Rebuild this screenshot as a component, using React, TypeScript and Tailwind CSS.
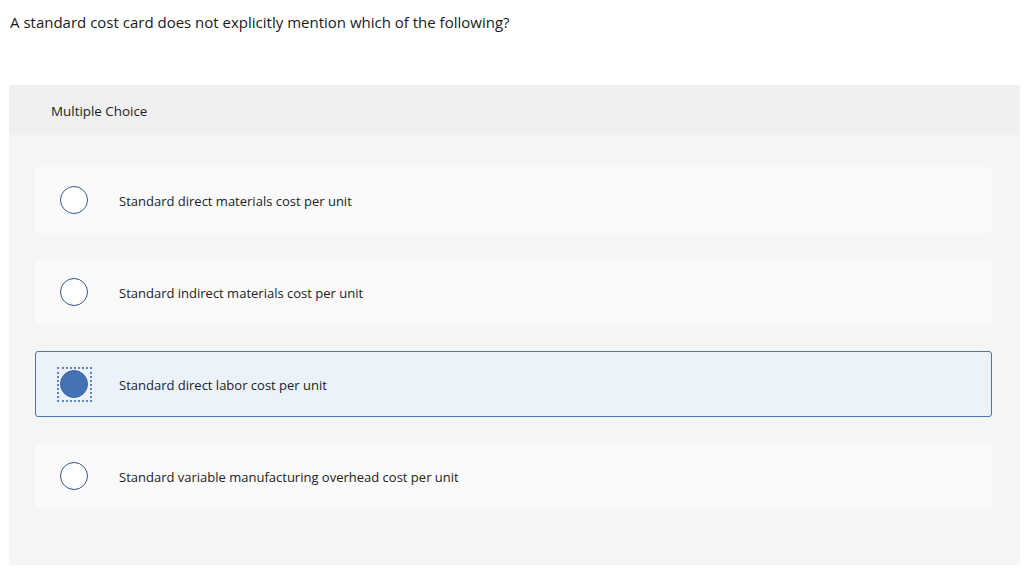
import { useState } from 'react';

const options = [
  'Standard direct materials cost per unit',
  'Standard indirect materials cost per unit',
  'Standard direct labor cost per unit',
  'Standard variable manufacturing overhead cost per unit',
];

const font = { fontFamily: '"Open Sans", Lato, sans-serif' };

export default function App() {
  const [picked, setPicked] = useState(2);

  return (
    <div className="w-[1024px] h-[577px] bg-white text-[#1a1a1a] overflow-hidden" style={font}>
      <p className="pl-[10px] pt-[12px] text-[15px] leading-[21px]">
        A standard cost card does not explicitly mention which of the following?
      </p>

      <div className="mt-[52px] ml-[9px] w-[1011px] rounded-[3px] bg-[#f5f5f5] overflow-hidden">
        <div className="h-[50px] bg-[#f0f0f0] pl-[42px] pt-[2px] flex items-center text-[13.4px] text-[#222]">
          Multiple Choice
        </div>

        <div className="pt-[32px] pb-[56px] pl-[26px] pr-[28px] flex flex-col gap-[26px]">
          {options.map((label, i) => {
            const on = picked === i;
            return (
              <button
                key={label}
                onClick={() => setPicked(i)}
                className={
                  'h-[66px] w-full flex items-center rounded-[3px] text-left ' +
                  (on ? 'bg-[#ebf2fa] border border-[#4a75b2]' : 'bg-[#fafafa] border border-[#fafafa]')
                }
              >
                <span className="w-[76px] shrink-0 flex justify-center">
                  {on ? (
                    <span className="w-[35px] h-[35px] flex items-center justify-center border-2 border-dotted border-[#5b86c6]">
                      <span className="w-[28px] h-[28px] rounded-full bg-[#4472b3] border border-[#3b669f]" />
                    </span>
                  ) : (
                    <span className="w-[28px] h-[28px] rounded-full bg-white border-[1.5px] border-[#36598a]" />
                  )}
                </span>
                <span className="pl-[7px] pt-[3px] text-[13px] text-[#222]">{label}</span>
              </button>
            );
          })}
        </div>
      </div>
    </div>
  );
}
